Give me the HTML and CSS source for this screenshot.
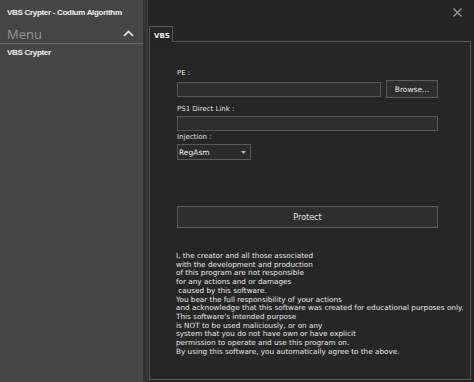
FILE: index.html
```html
<!DOCTYPE html>
<html>
<head>
    <title>VBS Crypter - Codium Algorithm</title>
    <link rel="stylesheet" href="styles.css">
</head>
<body>
    <div class="sidebar">
        <div class="app-title">VBS Crypter - Codium Algorithm</div>
        <div class="menu-head">
            <span>Menu</span>
            <svg class="chevron" width="11" height="7" viewBox="0 0 11 7"><path d="M1 6 L5.5 1.5 L10 6" fill="none" stroke="#e6e6e6" stroke-width="1.6"/></svg>
        </div>
        <div class="menu-item">VBS Crypter</div>
    </div>
    <div class="divider"></div>
    <div class="main">
        <div class="topbar">
            <svg class="close" width="9" height="9" viewBox="0 0 9 9"><path d="M0.5 0.5 L8.5 8.5 M8.5 0.5 L0.5 8.5" stroke="#9a9a9a" stroke-width="1.3"/></svg>
        </div>
        <div class="tabs">
            <div class="tab">VBS</div>
            <div class="tab-rest"></div>
        </div>
        <div class="panel">
            <div class="form">
                <label class="lbl">PE :</label>
                <div class="row">
                    <div class="input grow"></div>
                    <button class="btn browse">Browse...</button>
                </div>
                <label class="lbl">PS1 Direct Link :</label>
                <div class="input full"></div>
                <label class="lbl">Injection :</label>
                <div class="select">
                    <span>RegAsm</span>
                    <svg width="5" height="3" viewBox="0 0 5 3"><path d="M0 0 H5 L2.5 3 Z" fill="#bbb"/></svg>
                </div>
                <button class="btn protect">Protect</button>
                <p class="disclaimer">I, the creator and all those associated
with the development and production
of this program are not responsible
for any actions and or damages
 caused by this software.
You bear the full responsibility of your actions
and acknowledge that this software was created for educational purposes only.
This software's intended purpose
is NOT to be used maliciously, or on any
system that you do not have own or have explicit
permission to operate and use this program on.
By using this software, you automatically agree to the above.</p>
            </div>
        </div>
    </div>
</body>
</html>
```

FILE: styles.css
```css
body {
    margin: 0;
    width: 474px;
    height: 382px;
    display: flex;
    background: #252525;
    font-family: "DejaVu Sans", sans-serif;
    color: #e8e8e8;
    overflow: hidden;
}
.sidebar {
    width: 143px;
    background: #474646;
    display: flex;
    flex-direction: column;
}
.app-title {
    font-family: "Liberation Sans", sans-serif;
    font-size: 8px;
    font-weight: bold;
    color: #f0f0f0;
    padding: 8px 0 0 7px;
    height: 16px;
    white-space: nowrap;
    letter-spacing: -0.3px;
}
.menu-head {
    display: flex;
    justify-content: space-between;
    align-items: center;
    height: 19px;
    padding: 0 9px 0 7px;
    border-bottom: 1px solid #6a6a6a;
    font-family: "Open Sans", sans-serif;
    font-size: 13px;
    color: #939393;
}
.menu-item {
    font-family: "Liberation Sans", sans-serif;
    font-size: 8px;
    font-weight: bold;
    padding: 4px 0 0 7px;
    color: #f0f0f0;
    letter-spacing: -0.3px;
}
.divider {
    width: 4px;
    background: #333;
    border-right: 1px solid #3d3d3d;
}
.main {
    flex: 1;
    display: flex;
    flex-direction: column;
    padding: 0 3px 2px 1px;
}
.topbar {
    height: 26px;
    display: flex;
    justify-content: flex-end;
    align-items: flex-start;
}
.close {
    margin: 8px 9px 0 0;
}
.tabs {
    display: flex;
    height: 16px;
}
.tab {
    width: 24px;
    border: 1px solid #5a5a5a;
    border-bottom: none;
    font-size: 7px;
    font-weight: bold;
    color: #eee;
    padding: 5px 0 0 4px;
    box-sizing: border-box;
}
.tab-rest {
    flex: 1;
    border-bottom: 1px solid #5a5a5a;
}
.panel {
    flex: 1;
    border: 1px solid #5a5a5a;
    border-top: none;
    background: #262626;
}
.form {
    padding: 27px 0 0 27px;
    width: 261px;
    display: flex;
    flex-direction: column;
}
.lbl {
    font-size: 7px;
    color: #e0e0e0;
    height: 11px;
}
.row {
    display: flex;
    gap: 5px;
    align-items: center;
    margin-bottom: 7px;
}
.input {
    height: 13px;
    background: #2d2d2d;
    border: 1px solid #575757;
}
.grow {
    flex: 1;
}
.full {
    margin-bottom: 2px;
}
.btn {
    background: #2e2e2e;
    border: 1px solid #5b5b5b;
    color: #e4e4e4;
    font-family: "DejaVu Sans", sans-serif;
    font-size: 7.5px;
    padding: 0;
}
.browse {
    width: 52px;
    height: 18px;
}
.select {
    width: 74px;
    height: 16px;
    box-sizing: border-box;
    border: 1px solid #5a5a5a;
    background: #2b2b2b;
    display: flex;
    justify-content: space-between;
    align-items: center;
    padding: 0 4px 0 1px;
    font-size: 7.5px;
    color: #f0f0f0;
}
.protect {
    margin-top: 46px;
    height: 22px;
    font-size: 8px;
}
.disclaimer {
    margin: 24px 0 0 -1px;
    white-space: pre;
    font-size: 7.25px;
    line-height: 8.7px;
    color: #e6e6e6;
}
```
